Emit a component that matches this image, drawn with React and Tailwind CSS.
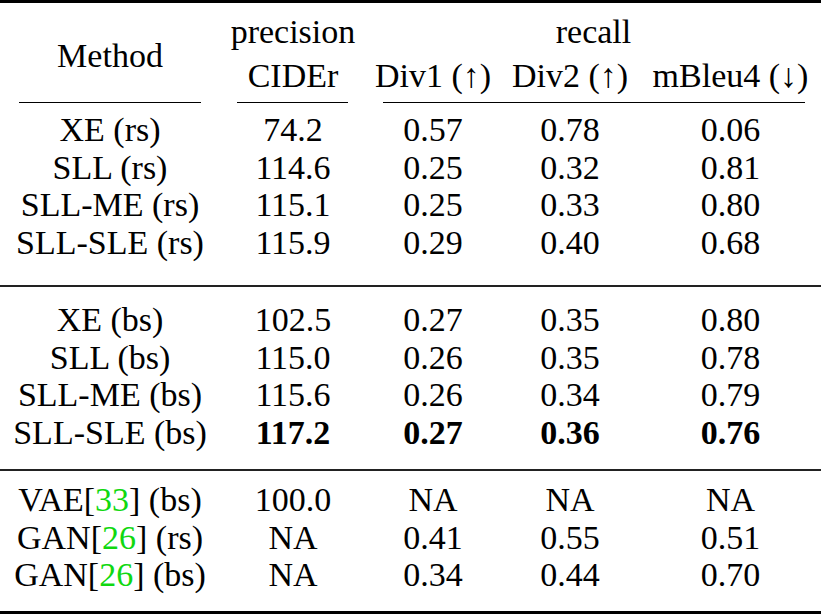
import React from 'react';

const cols = 'grid grid-cols-[220px_146px_134px_140px_181px]';

const blocks = [
    {
        pad: 'pt-[8px] pb-[24px]',
        rows: [
            { name: 'XE (rs)', vals: ['74.2', '0.57', '0.78', '0.06'] },
            { name: 'SLL (rs)', vals: ['114.6', '0.25', '0.32', '0.81'] },
            { name: 'SLL-ME (rs)', vals: ['115.1', '0.25', '0.33', '0.80'] },
            { name: 'SLL-SLE (rs)', vals: ['115.9', '0.29', '0.40', '0.68'] },
        ],
    },
    {
        pad: 'pt-[14px] pb-[18px]',
        rows: [
            { name: 'XE (bs)', vals: ['102.5', '0.27', '0.35', '0.80'] },
            { name: 'SLL (bs)', vals: ['115.0', '0.26', '0.35', '0.78'] },
            { name: 'SLL-ME (bs)', vals: ['115.6', '0.26', '0.34', '0.79'] },
            { name: 'SLL-SLE (bs)', vals: ['117.2', '0.27', '0.36', '0.76'], bold: true },
        ],
    },
    {
        pad: 'pt-[10px] pb-[17px]',
        rows: [
            { name: 'VAE', cite: '33', mode: 'bs', vals: ['100.0', 'NA', 'NA', 'NA'] },
            { name: 'GAN', cite: '26', mode: 'rs', vals: ['NA', '0.41', '0.55', '0.51'] },
            { name: 'GAN', cite: '26', mode: 'bs', vals: ['NA', '0.34', '0.44', '0.70'] },
        ],
    },
];

const Cell = ({ children, bold }) => (
    <div className={`h-[37.5px] leading-[37.5px] text-center whitespace-nowrap ${bold ? 'font-bold' : ''}`}>
        {children}
    </div>
);

const Row = ({ row }) => (
    <div className={cols}>
        <Cell>
            {row.cite
                ? <>{row.name}[<span className="text-[#10d810]">{row.cite}</span>] ({row.mode})</>
                : row.name}
        </Cell>
        {row.vals.map((v, i) => <Cell key={i} bold={row.bold}>{v}</Cell>)}
    </div>
);

const App = () => {
    return (
        <div className="w-[825px] h-[614px] bg-white text-black text-[34px] overflow-hidden font-['Liberation_Serif','Times_New_Roman','DejaVu_Serif',serif]">
            <div className="w-[821px]">
                <div className="h-[3px] bg-black" />

                <div className={`${cols} grid-rows-[38px_38px] gap-y-[6px] pt-[10px]`}>
                    <div className="row-span-2 flex items-center justify-center pt-[2px]">Method</div>
                    <Cell>precision</Cell>
                    <div className="col-span-3 h-[38px] leading-[38px] text-center">recall</div>
                    <Cell>CIDEr</Cell>
                    <Cell>Div1 (↑)</Cell>
                    <Cell>Div2 (↑)</Cell>
                    <Cell>mBleu4 (↓)</Cell>
                </div>

                <div className={`${cols} mt-[7px]`}>
                    <div className="px-[19px]"><div className="h-px bg-black" /></div>
                    <div className="pl-[17px] pr-[18px]"><div className="h-px bg-black" /></div>
                    <div className="col-span-3 pl-[17px] pr-[16px]"><div className="h-px bg-black" /></div>
                </div>

                {blocks.map((b, bi) => (
                    <div key={bi}>
                        <div className={b.pad}>
                            {b.rows.map((r, ri) => <Row key={ri} row={r} />)}
                        </div>
                        {bi < blocks.length - 1
                            ? <div className="h-[2px] bg-[#222]" />
                            : <div className="h-[3px] bg-black" />}
                    </div>
                ))}
            </div>
        </div>
    );
};

export default App;
